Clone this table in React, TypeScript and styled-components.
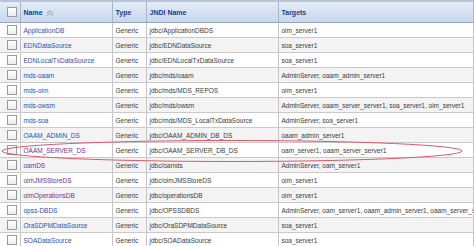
import React from 'react'
import styled, { createGlobalStyle } from 'styled-components'

const GlobalStyle = createGlobalStyle`
  html, body {
    margin: 0;
    padding: 0;
    background: #ffffff;
  }
  body {
    font-family: "Liberation Sans", Arial, sans-serif;
  }
`

const Frame = styled.div`
  position: relative;
  width: 474px;
  height: 246px;
  overflow: hidden;
  background: #ffffff;
  border-top: 2px solid #b7c3d6;
  box-sizing: border-box;
`

const Table = styled.table`
  width: 474px;
  table-layout: fixed;
  border-collapse: collapse;
  font-family: "Liberation Sans", Arial, sans-serif;
  font-size: 6.5px;
  color: #3a3a3a;
`

const HeadCell = styled.th<{ $first?: boolean }>`
  height: 20px;
  padding: 0 0 0 ${({ $first }) => ($first ? '0' : '3px')};
  text-align: left;
  font-size: 7px;
  font-weight: bold;
  color: #1d3a8a;
  background: linear-gradient(#e4ecf7, #c7d7ed);
  border-right: 1px solid #a9b6c9;
  border-bottom: 1px solid #98a6bb;
  white-space: nowrap;
  overflow: hidden;
`

const Row = styled.tr<{ $odd: boolean }>`
  background: ${({ $odd }) => ($odd ? '#f3f3f3' : '#ffffff')};
`

const Cell = styled.td<{ $first?: boolean }>`
  height: 14px;
  padding: 0 0 0 ${({ $first }) => ($first ? '0' : '3px')};
  border-right: 1px solid #c4c4c4;
  border-bottom: 1px solid #c9c9c9;
  white-space: nowrap;
  overflow: hidden;
`

const BoxWrap = styled.div`
  display: flex;
  justify-content: center;
  padding-left: 4px;
`

const Box = styled.span`
  display: block;
  width: 8px;
  height: 8px;
  border: 1px solid #9a9a9a;
  background: linear-gradient(#ffffff, #ececec);
`

const NameLink = styled.span<{ $visited?: boolean }>`
  color: ${({ $visited }) => ($visited ? '#7b2e8c' : '#2c4fae')};
`

const SortIcon = styled.svg`
  margin-left: 3px;
  vertical-align: -1px;
`

const Ring = styled.svg`
  position: absolute;
  left: 0;
  top: 0;
  pointer-events: none;
`

const rows = [
  ['ApplicationDB', 'jdbc/ApplicationDBDS', 'oim_server1', false],
  ['EDNDataSource', 'jdbc/EDNDataSource', 'soa_server1', false],
  ['EDNLocalTxDataSource', 'jdbc/EDNLocalTxDataSource', 'soa_server1', false],
  ['mds-oaam', 'jdbc/mds/oaam', 'AdminServer, oaam_admin_server1', false],
  ['mds-oim', 'jdbc/mds/MDS_REPOS', 'oim_server1', false],
  ['mds-owsm', 'jdbc/mds/owsm', 'AdminServer, oaam_server_server1, soa_server1, oim_server1', false],
  ['mds-soa', 'jdbc/mds/MDS_LocalTxDataSource', 'AdminServer, soa_server1', false],
  ['OAAM_ADMIN_DS', 'jdbc/OAAM_ADMIN_DB_DS', 'oaam_admin_server1', false],
  ['OAAM_SERVER_DS', 'jdbc/OAAM_SERVER_DB_DS', 'oam_server1, oaam_server_server1', true],
  ['oamDS', 'jdbc/oamds', 'AdminServer, oam_server1', true],
  ['oimJMSStoreDS', 'jdbc/oimJMSStoreDS', 'oim_server1', true],
  ['oimOperationsDB', 'jdbc/operationsDB', 'oim_server1', true],
  ['opss-DBDS', 'jdbc/OPSSDBDS', 'AdminServer, oam_server1, oaam_admin_server1, oaam_server_server1', false],
  ['OraSDPMDataSource', 'jdbc/OraSDPMDataSource', 'soa_server1', false],
  ['SOADataSource', 'jdbc/SOADataSource', 'soa_server1', false],
] as const

const App = () => (
  <Frame>
    <GlobalStyle />
    <Table>
      <colgroup>
        <col style={{ width: 20 }} />
        <col style={{ width: 92 }} />
        <col style={{ width: 34 }} />
        <col style={{ width: 132 }} />
        <col />
      </colgroup>
      <thead>
        <tr>
          <HeadCell $first>
            <BoxWrap>
              <Box />
            </BoxWrap>
          </HeadCell>
          <HeadCell>
            Name
            <SortIcon width="8" height="6" viewBox="0 0 8 6">
              <path d="M1 3 L4 0.8 L7 3 M1 5.5 L4 3.3 L7 5.5" fill="none" stroke="#8a9ac0" strokeWidth="0.9" />
            </SortIcon>
          </HeadCell>
          <HeadCell>Type</HeadCell>
          <HeadCell>JNDI Name</HeadCell>
          <HeadCell>Targets</HeadCell>
        </tr>
      </thead>
      <tbody>
        {rows.map(([name, jndi, targets, visited], i) => (
          <Row key={name} $odd={i % 2 === 1}>
            <Cell $first>
              <BoxWrap>
                <Box />
              </BoxWrap>
            </Cell>
            <Cell>
              <NameLink $visited={visited}>{name}</NameLink>
            </Cell>
            <Cell>Generic</Cell>
            <Cell>{jndi}</Cell>
            <Cell>{targets}</Cell>
          </Row>
        ))}
      </tbody>
    </Table>
    <Ring width="474" height="246" viewBox="0 0 474 246">
      <ellipse cx="232" cy="149" rx="230" ry="10.5" fill="none" stroke="#e0566a" strokeWidth="1" />
    </Ring>
  </Frame>
)

export default App
